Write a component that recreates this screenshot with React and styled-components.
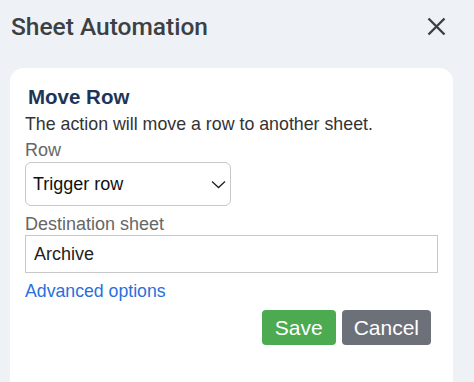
import styled, { createGlobalStyle } from "styled-components"

const Global = createGlobalStyle`
  html, body {
    margin: 0;
    padding: 0;
    background: #eef2f7;
    overflow: hidden;
  }
`

const Page = styled.div`
  width: 474px;
  height: 382px;
  overflow: hidden;
  font-family: "Liberation Sans", Arial, sans-serif;
`

const Header = styled.div`
  display: flex;
  align-items: center;
  justify-content: space-between;
  height: 52px;
  padding: 0 28px 0 11px;
`

const Title = styled.h1`
  margin: 0;
  font-family: Roboto, "Noto Sans", sans-serif;
  font-weight: 500;
  font-size: 24.5px;
  color: #3c4043;
`

const Close = styled.button`
  display: flex;
  padding: 0;
  border: none;
  background: none;
  cursor: pointer;
`

const Card = styled.div`
  margin: 16px 21px 0 10px;
  background: #fff;
  border-radius: 14px;
  height: 340px;
  padding: 17px 15px 0 15px;
  box-sizing: border-box;
`

const Heading = styled.h2`
  margin: 0 0 2px 3px;
  font-size: 20.5px;
  line-height: 24px;
  font-weight: 700;
  color: #1e3557;
`

const Desc = styled.p`
  margin: 0 0 2px;
  font-size: 17.8px;
  line-height: 26px;
  color: #333;
`

const Label = styled.div`
  font-size: 18px;
  line-height: 22px;
  color: #666;
  margin-bottom: 1px;
`

const SelectBox = styled.div`
  display: flex;
  align-items: center;
  justify-content: space-between;
  width: 206px;
  height: 44px;
  box-sizing: border-box;
  border: 1px solid #c8c8c8;
  border-radius: 6px;
  padding: 0 4px 0 7px;
  font-size: 18px;
  color: #111;
  margin-bottom: 7px;
`

const TextBox = styled.div`
  display: flex;
  align-items: center;
  width: 413px;
  height: 38px;
  box-sizing: border-box;
  border: 1px solid #c8c8c8;
  padding: 0 8px;
  font-size: 18px;
  color: #222;
  margin-top: -1px;
  margin-bottom: 7px;
`

const Link = styled.a`
  display: block;
  font-size: 17.7px;
  line-height: 22px;
  color: #2a6fdc;
  text-decoration: none;
`

const Actions = styled.div`
  display: flex;
  justify-content: flex-end;
  gap: 6px;
  margin-top: 8px;
  padding-right: 7px;
`

const Button = styled.button`
  height: 35px;
  border: none;
  border-radius: 4px;
  padding: 0 ${p => (p.$primary ? "13px" : "12px")};
  font-family: "Liberation Sans", Arial, sans-serif;
  font-size: 21px;
  color: #fff;
  background: ${p => (p.$primary ? "#4caa50" : "#6b7079")};
`

export default function App() {
  return (
    <Page>
      <Global />
      <Header>
        <Title>Sheet Automation</Title>
        <Close aria-label="Close">
          <svg width="19" height="19" viewBox="0 0 19 19">
            <path d="M1.5 1.5L17.5 17.5M17.5 1.5L1.5 17.5" stroke="#3c4043" strokeWidth="2.4" />
          </svg>
        </Close>
      </Header>
      <Card>
        <Heading>Move Row</Heading>
        <Desc>The action will move a row to another sheet.</Desc>
        <Label>Row</Label>
        <SelectBox>
          Trigger row
          <svg width="15" height="9" viewBox="0 0 15 9">
            <path d="M1 1.5l6.5 6L14 1.5" fill="none" stroke="#222" strokeWidth="1.3" />
          </svg>
        </SelectBox>
        <Label>Destination sheet</Label>
        <TextBox>Archive</TextBox>
        <Link href="#">Advanced options</Link>
        <Actions>
          <Button $primary>Save</Button>
          <Button>Cancel</Button>
        </Actions>
      </Card>
    </Page>
  )
}
